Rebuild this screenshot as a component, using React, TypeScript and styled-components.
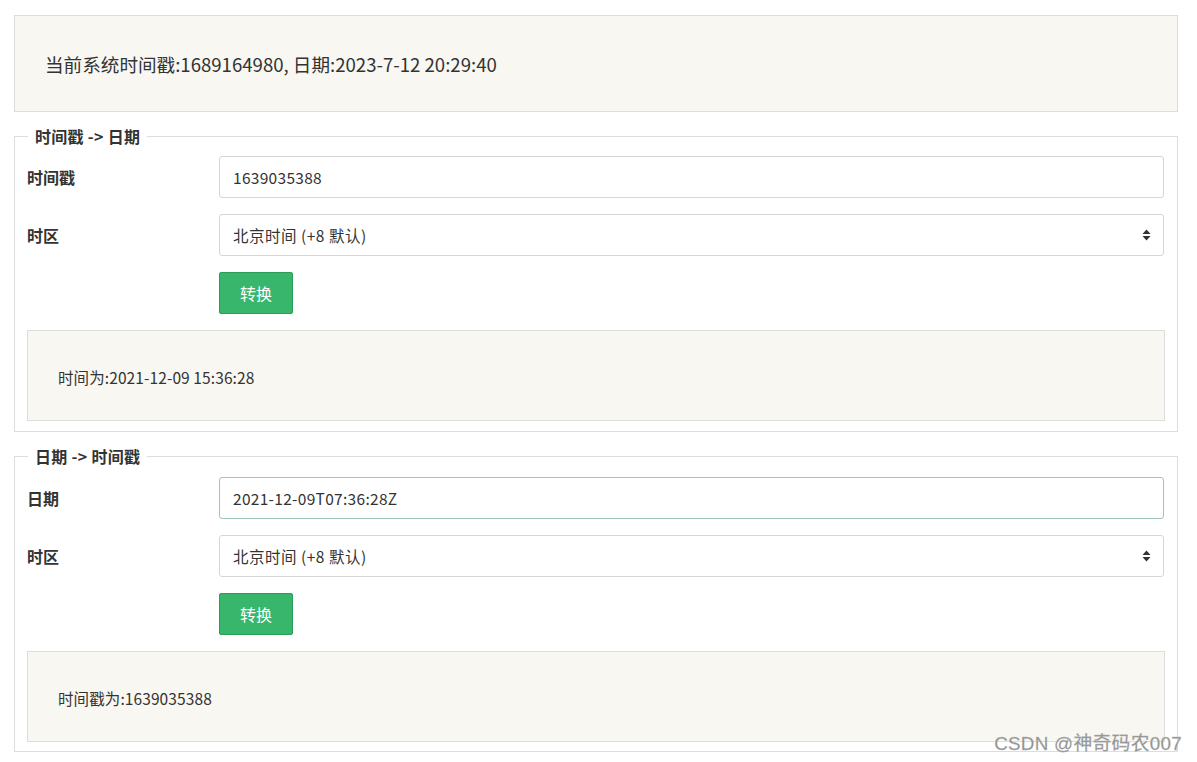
import React, { useState } from 'react'
import styled, { createGlobalStyle } from 'styled-components'

const GlobalStyle = createGlobalStyle`
  html, body {
    margin: 0;
    padding: 0;
    background: #fff;
  }
  body {
    font-family: 'Noto Sans CJK SC', 'Noto Sans', sans-serif;
    color: #333;
  }
  * {
    box-sizing: border-box;
  }
`

const Page = styled.div`
  position: relative;
  width: 1197px;
  height: 762px;
  padding: 15px 19px 0 14px;
  overflow: hidden;
`

const Panel = styled.div`
  height: 97px;
  display: flex;
  align-items: center;
  padding: 0 30px 0;
  background: #f8f7f2;
  border: 1px solid #ddd;
  font-size: 18.6px;
  color: #333;
`

const Fieldset = styled.fieldset`
  margin: 14px 0 0;
  padding: 10px 13px 10px 12px;
  border: 1px solid #ddd;
  min-width: 0;

  & + & {
    padding-top: 11px;
    padding-bottom: 9px;
  }
`

const Legend = styled.legend`
  padding: 0 7px;
  margin-left: 1px;
  font-size: 16px;
  font-weight: bold;
  letter-spacing: 0.3px;
  line-height: 20px;
  color: #333;
`

const Form = styled.div`
  display: grid;
  grid-template-columns: 192px 1fr;
  row-gap: 16px;
`

const Label = styled.label`
  font-size: 16px;
  font-weight: bold;
  line-height: 20px;
  padding-top: 11px;
  color: #333;
`

const Input = styled.input<{ $focused?: boolean }>`
  width: 100%;
  height: 42px;
  padding: 0 13px;
  font: inherit;
  font-size: 15.5px;
  letter-spacing: 0.3px;
  color: #333;
  border: 1px solid ${p => (p.$focused ? '#9fc6b4' : '#d6d6d6')};
  border-radius: 3px;
  outline: none;
  background: #fff;
`

const SelectWrap = styled.div`
  position: relative;
`

const Select = styled.select`
  width: 100%;
  height: 42px;
  padding: 0 13px;
  font: inherit;
  font-size: 15.5px;
  letter-spacing: 0.5px;
  color: #333;
  border: 1px solid #d6d6d6;
  border-radius: 3px;
  background: #fff;
  appearance: none;
  outline: none;
`

const Arrows = styled.svg`
  position: absolute;
  right: 13px;
  top: 15px;
  pointer-events: none;
`

const Cell = styled.div`
  grid-column: 2;
`

const Button = styled.button`
  width: 74px;
  height: 42px;
  border: 1px solid #2a9d58;
  border-radius: 2px;
  background: #38b66b;
  color: #fff;
  font: inherit;
  font-size: 16px;
  cursor: pointer;
`

const Result = styled.div`
  grid-column: 1 / span 2;
  height: 91px;
  margin-right: -1px;
  display: flex;
  align-items: center;
  padding: 2px 30px 0;
  background: #f8f7f2;
  border: 1px solid #ddd;
  font-size: 15.5px;
  letter-spacing: 0.1px;
  color: #333;
`

const Watermark = styled.div`
  position: absolute;
  right: 15px;
  bottom: 7px;
  font-family: 'Liberation Sans', 'Noto Sans CJK SC', sans-serif;
  font-size: 18.8px;
  letter-spacing: 0.3px;
  color: #8f8f8f;
  -webkit-text-stroke: 0.3px #bbb;
`

const UpDown = () => (
  <Arrows width="9" height="12" viewBox="0 0 9 12">
    <path d="M4.5 0.5 L8.5 5 H0.5 Z" fill="#333" />
    <path d="M4.5 11.5 L8.5 7 H0.5 Z" fill="#333" />
  </Arrows>
)

interface ConverterProps {
  legend: string
  label: string
  value: string
  focused?: boolean
  result: string
}

const Converter = ({ legend, label, value, focused, result }: ConverterProps) => {
  const [text, setText] = useState(value)
  return (
    <Fieldset>
      <Legend>{legend}</Legend>
      <Form>
        <Label>{label}</Label>
        <Input $focused={focused} value={text} onChange={e => setText(e.target.value)} />
        <Label>时区</Label>
        <SelectWrap>
          <Select defaultValue="8">
            <option value="8">北京时间 (+8 默认)</option>
            <option value="0">UTC (+0)</option>
          </Select>
          <UpDown />
        </SelectWrap>
        <Cell>
          <Button>转换</Button>
        </Cell>
        <Result>{result}</Result>
      </Form>
    </Fieldset>
  )
}

export default function App() {
  return (
    <Page>
      <GlobalStyle />
      <Panel>当前系统时间戳:1689164980, 日期:2023-7-12 20:29:40</Panel>
      <Converter
        legend="时间戳 -> 日期"
        label="时间戳"
        value="1639035388"
        result="时间为:2021-12-09 15:36:28"
      />
      <Converter
        legend="日期 -> 时间戳"
        label="日期"
        value="2021-12-09T07:36:28Z"
        focused
        result="时间戳为:1639035388"
      />
      <Watermark>CSDN @神奇码农007</Watermark>
    </Page>
  )
}
